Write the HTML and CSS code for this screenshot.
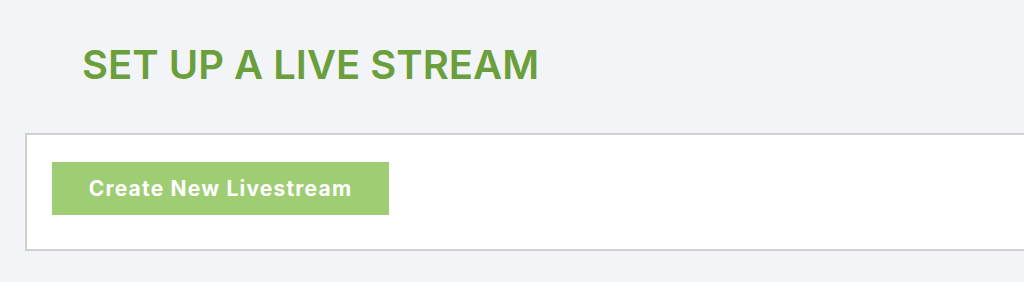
FILE: index.html
```html
<!DOCTYPE html>
<html lang="en">
<head>
    <meta charset="UTF-8">
    <meta name="viewport" content="width=device-width, initial-scale=1.0">
    <title>Set up a live stream</title>
    <link rel="stylesheet" href="styles.css">
</head>
<body>

    <div class="page">
        <h1 class="title">SET UP A LIVE STREAM</h1>

        <div class="panel">
            <button class="btn">Create New Livestream</button>
        </div>
    </div>

</body>
</html>
```

FILE: styles.css
```css
body {
    background-color: #f3f4f8;
    font-family: Inter, "Liberation Sans", Arial, sans-serif;
    margin: 0;
    overflow: hidden;
}
.page {
    padding: 41px 0 0 25px;
}
.title {
    color: #6a9f3b;
    font-size: 40px;
    font-weight: 600;
    line-height: 48px;
    margin: 0 0 44px 57px;
}
.panel {
    background-color: #ffffff;
    border: 2px solid #d0d0d2;
    width: 1100px;
    height: 118px;
    padding: 27px 25px;
    box-sizing: border-box;
}
.btn {
    width: 337px;
    height: 53px;
    border: none;
    background-color: #9ecd74;
    color: #ffffff;
    font-family: Inter, "Liberation Sans", Arial, sans-serif;
    font-size: 21px;
    font-weight: 700;
    letter-spacing: 1.2px;
    cursor: pointer;
    padding: 0;
}
```
